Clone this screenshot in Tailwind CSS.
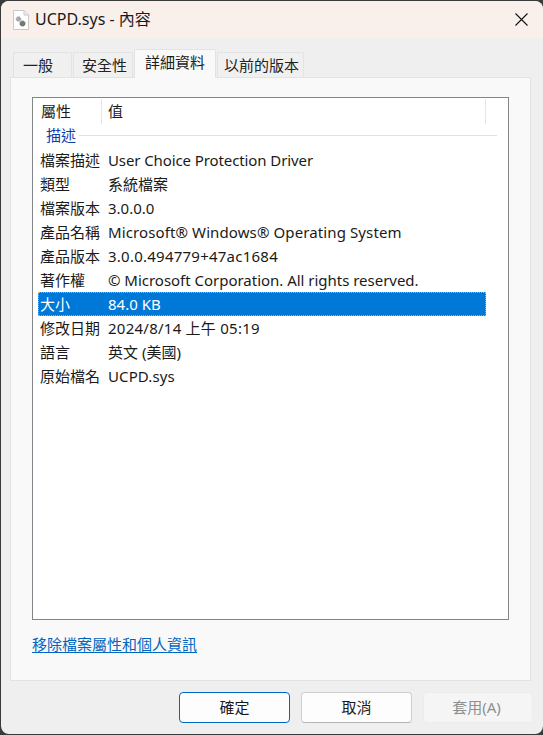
<!DOCTYPE html>
<html lang="zh-Hant"><head><meta charset="utf-8">
<script src="https://cdn.jsdelivr.net/npm/@tailwindcss/browser@4"></script>
</head>
<body class="m-0 bg-[#3b3b3b]">
<div class="w-[543px] h-[735px] overflow-hidden font-['Noto_Sans','Noto_Sans_CJK_TC',sans-serif] text-[15px] leading-[24px] text-[#1a1a1a]">
<div class="ml-px mt-px w-[542px] h-[733px] bg-[#efefef] rounded-t-[8px] rounded-b-[8px] flex flex-col overflow-hidden">
  <div class="h-[37px] shrink-0 bg-[#f9f0ec] flex items-center pl-[12px] pr-[15px]">
    <svg width="16" height="20" viewBox="0 0 16 20" class="shrink-0">
      <path d="M.5.5H11L15.5 5V19.5H.5Z" fill="#fff" stroke="#c8c8c8"/>
      <path d="M11 .5V5H15.5" fill="#eee" stroke="#c8c8c8"/>
      <circle cx="5.5" cy="9" r="2.3" fill="#a8a8a8" stroke="#999" stroke-dasharray="1.2 .8"/>
      <circle cx="9.5" cy="13.5" r="2.6" fill="#777" stroke="#666" stroke-dasharray="1.2 .8"/>
    </svg>
    <span class="ml-[6px] text-[16px] -mt-[2px]">UCPD.sys - 內容</span>
    <svg width="13" height="13" viewBox="0 0 13 13" class="ml-auto"><path d="M.5.5l12 12M12.5.5l-12 12" stroke="#111" stroke-width="1.1" fill="none"/></svg>
  </div>
  <div class="flex items-end h-[39px] pl-[12px] gap-px shrink-0 relative z-10">
    <div class="w-[59px] h-[25px] bg-[#f0f0f0] border border-b-0 border-[#e3e3e3] pl-[9px] leading-[24px] text-[#222]">一般</div>
    <div class="w-[60px] h-[25px] bg-[#f0f0f0] border border-b-0 border-[#e3e3e3] pl-[8px] leading-[24px] text-[#222]">安全性</div>
    <div class="w-[82px] h-[29px] -mb-px bg-[#f9f9f9] border border-b-0 border-[#e3e3e3] rounded-t-[2px] text-center leading-[24px]">詳細資料</div>
    <div class="w-[87px] h-[25px] bg-[#f0f0f0] border border-b-0 border-[#e3e3e3] pl-[6px] leading-[24px] text-[#222]">以前的版本</div>
  </div>
  <div class="ml-[9px] w-[521px] h-[604px] shrink-0 bg-[#f9f9f9] border border-[#e3e3e3] pl-[21px] pt-[19px]">
    <div class="w-[477px] h-[523px] bg-white border border-[#82858a] pt-px pl-[5px] flex flex-col">
      <div class="flex h-[25px] shrink-0">
        <div class="w-[64px] border-r border-[#e5e5e5] pl-[3px]">屬性</div>
        <div class="w-[384px] border-r border-[#e5e5e5] pl-[6px]">值</div>
      </div>
      <div class="flex items-center h-[22px] shrink-0 pl-[8px] pr-[11px] text-[#0f3ca8] mb-[2px]">
        <span>描述</span><span class="flex-1 h-px bg-[#dde3e9] ml-[3px]"></span>
      </div>
      <div class="w-[448px] flex flex-col">
        <div class="flex h-[24px]"><span class="w-[70px] pl-[2px]">檔案描述</span><span class="tracking-[-0.1px]">User Choice Protection Driver</span></div>
        <div class="flex h-[24px]"><span class="w-[70px] pl-[2px]">類型</span><span>系統檔案</span></div>
        <div class="flex h-[24px]"><span class="w-[70px] pl-[2px]">檔案版本</span><span>3.0.0.0</span></div>
        <div class="flex h-[24px]"><span class="w-[70px] pl-[2px]">產品名稱</span><span class="tracking-[0.11px]">Microsoft® Windows® Operating System</span></div>
        <div class="flex h-[24px]"><span class="w-[70px] pl-[2px]">產品版本</span><span class="tracking-[0.24px]">3.0.0.494779+47ac1684</span></div>
        <div class="flex h-[24px]"><span class="w-[70px] pl-[2px]">著作權</span><span class="tracking-[-0.02px]">© Microsoft Corporation. All rights reserved.</span></div>
        <div class="flex h-[24px] bg-[#0078d7] text-white outline-1 outline-dotted -outline-offset-1 outline-[#f0a050]"><span class="w-[70px] pl-[2px]">大小</span><span>84.0 KB</span></div>
        <div class="flex h-[24px]"><span class="w-[70px] pl-[2px]">修改日期</span><span class="tracking-[0.25px]">2024/8/14 上午 05:19</span></div>
        <div class="flex h-[24px]"><span class="w-[70px] pl-[2px]">語言</span><span>英文 (美國)</span></div>
        <div class="flex h-[24px]"><span class="w-[70px] pl-[2px]">原始檔名</span><span class="tracking-[0.1px]">UCPD.sys</span></div>
      </div>
    </div>
    <a class="block mt-[12px] w-fit text-[#0067c0] underline underline-offset-2">移除檔案屬性和個人資訊</a>
  </div>
  <div class="flex pl-[178px] gap-[11px] mt-[11px]">
    <div class="w-[111px] h-[31px] bg-[#fdfdfd] border-[1.5px] border-[#0067c0] rounded-[4px] flex items-center justify-center pb-[2px]">確定</div>
    <div class="w-[111px] h-[31px] bg-[#fdfdfd] border border-[#d0d0d0] border-b-[#b5b5b5] rounded-[4px] flex items-center justify-center pb-[2px]">取消</div>
    <div class="w-[110px] h-[31px] bg-[#f5f5f5] border border-[#ececec] rounded-[4px] flex items-center justify-center text-[#8f8f8f] pb-[2px] pr-[3px]">套用(A)</div>
  </div>
</div>
</div>
</body></html>
